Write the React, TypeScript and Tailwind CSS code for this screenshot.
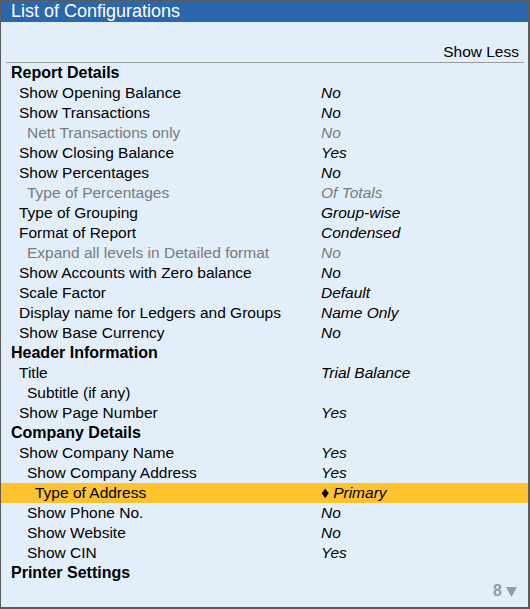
type Row = {
  label: string;
  value?: string;
  level: 0 | 1 | 2 | 3;
  dim?: boolean;
  active?: boolean;
};

const rows: Row[] = [
  { label: "Report Details", level: 0 },
  { label: "Show Opening Balance", value: "No", level: 1 },
  { label: "Show Transactions", value: "No", level: 1 },
  { label: "Nett Transactions only", value: "No", level: 2, dim: true },
  { label: "Show Closing Balance", value: "Yes", level: 1 },
  { label: "Show Percentages", value: "No", level: 1 },
  { label: "Type of Percentages", value: "Of Totals", level: 2, dim: true },
  { label: "Type of Grouping", value: "Group-wise", level: 1 },
  { label: "Format of Report", value: "Condensed", level: 1 },
  { label: "Expand all levels in Detailed format", value: "No", level: 2, dim: true },
  { label: "Show Accounts with Zero balance", value: "No", level: 1 },
  { label: "Scale Factor", value: "Default", level: 1 },
  { label: "Display name for Ledgers and Groups", value: "Name Only", level: 1 },
  { label: "Show Base Currency", value: "No", level: 1 },
  { label: "Header Information", level: 0 },
  { label: "Title", value: "Trial Balance", level: 1 },
  { label: "Subtitle (if any)", level: 2 },
  { label: "Show Page Number", value: "Yes", level: 1 },
  { label: "Company Details", level: 0 },
  { label: "Show Company Name", value: "Yes", level: 1 },
  { label: "Show Company Address", value: "Yes", level: 2 },
  { label: "Type of Address", value: "Primary", level: 3, active: true },
  { label: "Show Phone No.", value: "No", level: 2 },
  { label: "Show Website", value: "No", level: 2 },
  { label: "Show CIN", value: "Yes", level: 2 },
  { label: "Printer Settings", level: 0 },
];

const indent = ["pl-[10px]", "pl-[18px]", "pl-[26px]", "pl-[34px]"];

export default function App() {
  return (
    <div
      className="w-[530px] h-[609px] flex flex-col bg-[#e2effa] border-t border-l border-r-2 border-b-2 border-[#5b5b5b] text-black"
      style={{ fontFamily: '"Liberation Sans", Arial, sans-serif' }}
    >
      {/* Title bar */}
      <div className="h-[21px] bg-[#2a67ad] text-white text-[18px] leading-[21px] pl-[10px]">
        List of Configurations
      </div>

      {/* Show Less */}
      <div className="h-[40px] flex items-end justify-end pr-[9px]">
        <span className="text-[15.5px] leading-[20px]">Show Less</span>
      </div>
      <div className="h-px bg-[#9a9a9a] ml-[5px] mr-[4px]" />

      {/* Configuration rows */}
      <div className="flex flex-col">
        {rows.map((r) => (
          <div
            key={r.label}
            className={`h-[20px] flex items-center text-[15.5px] leading-[20px] ${
              r.active ? "bg-[#fec32f]" : ""
            }`}
          >
            <div
              className={`w-[320px] whitespace-nowrap ${indent[r.level]} ${
                r.level === 0 ? "font-bold text-[16px]" : ""
              } ${r.dim ? "text-[#7a7a7a]" : ""}`}
            >
              {r.label}
            </div>
            {r.value && (
              <div className={`italic whitespace-nowrap ${r.dim ? "text-[#7a7a7a]" : ""}`}>
                {r.active && <span className="not-italic text-[16px] mr-[4px]">♦</span>}
                {r.value}
              </div>
            )}
          </div>
        ))}
      </div>

      {/* Page indicator */}
      <div className="mt-auto flex justify-end items-center pr-[11px] pb-[8px] text-[#9a9a9a] font-bold text-[16px] leading-[16px]">
        <span>8</span>
        <svg width="11" height="11" viewBox="0 0 11 11" className="ml-[4px]">
          <path d="M0 1 H11 L5.5 11 Z" fill="#9a9a9a" />
        </svg>
      </div>
    </div>
  );
}
